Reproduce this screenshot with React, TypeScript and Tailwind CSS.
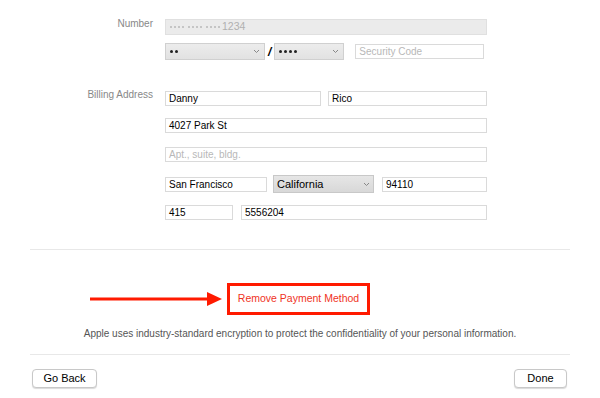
import React from "react";

const base =
  "h-[15px] border border-[#dadada] bg-white text-[10px] leading-[13px] px-[3px] flex items-center";
const inp = `${base} text-black`;
const ph = `${base} text-[#b8b8b8]`;

function Chevron() {
  return (
    <svg width="7" height="5" viewBox="0 0 7 5" className="shrink-0">
      <path d="M1 1 L3.5 3.5 L6 1" fill="none" stroke="#888" strokeWidth="1" />
    </svg>
  );
}

function Dots({ n, size, color, gap }: { n: number; size: string; color: string; gap: string }) {
  return (
    <span className={`inline-flex items-center ${gap}`}>
      {Array.from({ length: n }).map((_, i) => (
        <span key={i} className={`inline-block rounded-full ${size} ${color}`} />
      ))}
    </span>
  );
}

export default function App() {
  return (
    <div className="w-[600px] h-[398px] bg-white overflow-hidden font-['Liberation_Sans',Arial,sans-serif]">
      <div className="pt-[19px]">
        {/* Number */}
        <div className="flex">
          <div className="w-[153px] text-right text-[10px] leading-[12px] text-[#888] -mt-[1px]">Number</div>
          <div className="ml-[12px] w-[322px]">
            <div className="h-[16px] bg-[#ebebeb] border border-[#e0e0e0] flex items-center px-[4px] text-[10.5px] text-[#b0b0b0]">
              <span className="inline-flex items-center gap-[4px] mr-[2px]">
                <Dots n={4} size="w-[2px] h-[2px]" color="bg-[#b8b8b8]" gap="gap-[2px]" />
                <Dots n={4} size="w-[2px] h-[2px]" color="bg-[#b8b8b8]" gap="gap-[2px]" />
                <Dots n={4} size="w-[2px] h-[2px]" color="bg-[#b8b8b8]" gap="gap-[2px]" />
              </span>
              <span>1234</span>
            </div>
            <div className="flex items-center mt-[8px]">
              <div className="w-[100px] h-[17px] border border-[#d0d0d0] bg-[linear-gradient(#ececec,#e2e2e2)] flex items-center justify-between px-[4px]">
                <Dots n={2} size="w-[3px] h-[3px]" color="bg-[#222]" gap="gap-[2px]" />
                <Chevron />
              </div>
              <span className="mx-[3px] text-[12px] font-bold italic text-black leading-none">/</span>
              <div className="w-[70px] h-[17px] border border-[#d0d0d0] bg-[linear-gradient(#ececec,#e2e2e2)] flex items-center justify-between px-[4px]">
                <Dots n={4} size="w-[3px] h-[3px]" color="bg-[#222]" gap="gap-[2px]" />
                <Chevron />
              </div>
              <div className="ml-[11px] w-[129px] h-[15px] border border-[#dadada] bg-white flex items-center px-[3px] text-[10px] text-[#b8b8b8]">
                Security Code
              </div>
            </div>
          </div>
        </div>

        {/* Billing Address */}
        <div className="flex mt-[31px]">
          <div className="w-[153px] text-right text-[10px] leading-[12px] text-[#888] -mt-[2px]">Billing Address</div>
          <div className="ml-[12px] w-[322px] flex flex-col">
            <div className="flex gap-[7px]">
              <div className={`${inp} w-[156px]`}>Danny</div>
              <div className={`${inp} w-[159px]`}>Rico</div>
            </div>
            <div className={`${inp} mt-[12px]`}>4027 Park St</div>
            <div className={`${ph} mt-[14px]`}>Apt., suite, bldg.</div>
            <div className="flex items-center mt-[13px]">
              <div className={`${inp} w-[102px]`}>San Francisco</div>
              <div className="ml-[6px] w-[101px] h-[18px] border border-[#c8c8c8] bg-[linear-gradient(#e6e6e6,#d8d8d8)] flex items-center justify-between px-[3px] text-[11px] text-black">
                <span>California</span>
                <Chevron />
              </div>
              <div className={`${inp} ml-[8px] w-[105px]`}>94110</div>
            </div>
            <div className="flex mt-[12px] gap-[8px]">
              <div className={`${inp} w-[68px]`}>415</div>
              <div className={`${inp} w-[246px]`}>5556204</div>
            </div>
          </div>
        </div>

        <div className="mx-[30px] mt-[29px] h-px bg-[#e8e8e8]" />

        {/* Remove payment method */}
        <div className="flex items-center mt-[33px] pl-[90px]">
          <svg width="133" height="14" viewBox="0 0 133 14" className="shrink-0">
            <line x1="0" y1="7" x2="120" y2="7" stroke="#ff1a00" strokeWidth="3" />
            <polygon points="117,0 132,7 117,14" fill="#ff1a00" />
          </svg>
          <div className="ml-[4px] w-[143px] h-[32px] border-[3px] border-[#ff1a00] flex items-center justify-center text-[10.5px] text-[#f0331e]">
            Remove Payment Method
          </div>
        </div>

        <div className="mt-[12px] text-center text-[10px] leading-[13px] text-[#555]">
          Apple uses industry-standard encryption to protect the confidentiality of your personal information.
        </div>

        <div className="mx-[30px] mt-[14px] h-px bg-[#e8e8e8]" />

        <div className="flex justify-between mx-[32px] mt-[14px] pr-[1px]">
          <div className="w-[65px] h-[19px] border border-[#c8c8c8] rounded-[4px] bg-white shadow-[0_1px_1px_rgba(0,0,0,0.15)] flex items-center justify-center text-[11px] text-black">
            Go Back
          </div>
          <div className="w-[53px] h-[19px] border border-[#c8c8c8] rounded-[4px] bg-white shadow-[0_1px_1px_rgba(0,0,0,0.15)] flex items-center justify-center text-[11px] text-black">
            Done
          </div>
        </div>
      </div>
    </div>
  );
}
